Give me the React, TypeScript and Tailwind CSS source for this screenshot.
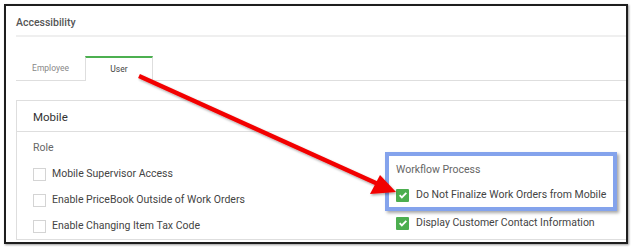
import React from 'react';

function Box({ checked }: { checked?: boolean }) {
  if (checked) {
    return (
      <span className="flex h-[13px] w-[13px] shrink-0 items-center justify-center rounded-[1px] bg-[#4cae4f]">
        <svg viewBox="0 0 12 12" className="h-[10px] w-[10px]">
          <path d="M2 6.2l2.6 2.6L10 3.4" fill="none" stroke="#fff" strokeWidth="2.2" />
        </svg>
      </span>
    );
  }
  return <span className="h-[13px] w-[13px] shrink-0 border border-[#d4d4d4] bg-white" />;
}

export default function App() {
  const left = [
    'Mobile Supervisor Access',
    'Enable PriceBook Outside of Work Orders',
    'Enable Changing Item Tax Code',
  ];

  return (
    <div className="relative h-[248px] w-[632px] bg-white p-[4px] font-['Roboto',sans-serif]">
      <div className="h-[240px] overflow-hidden border-2 border-[#1e1e1e] bg-white shadow-[1px_1px_2px_rgba(0,0,0,0.4)]">
        {/* Header */}
        <div className="ml-[10px] flex h-[31px] items-center border-b-2 border-[#efefef] pt-[4px] text-[10.5px] font-medium text-[#555]">
          Accessibility
        </div>

        {/* Tabs */}
        <div className="ml-[10px] mt-[19px] flex h-[25px] border-b border-[#dedede] text-[8.5px]">
          <div className="flex w-[69px] items-center justify-center pt-[1px] text-[#888]">Employee</div>
          <div className="-mb-px flex w-[68px] items-center justify-center border-x border-t-2 border-x-[#dedede] border-t-[#4cb050] bg-white text-[#444]">
            User
          </div>
        </div>

        {/* Mobile panel */}
        <div className="ml-[10px] mt-[19px] w-[640px] border border-[#dedede]">
          <div className="flex h-[31px] items-center border-b border-[#dedede] pl-[16px] pt-[3px] text-[11.5px] text-[#333]">
            Mobile
          </div>
          <div className="flex pl-[16px]">
            <div className="w-[363px]">
              <div className="flex h-[29px] items-center pt-[3px] text-[10.5px] text-[#666]">Role</div>
              <div className="flex flex-col">
                {left.map((t) => (
                  <div key={t} className="flex h-[26px] items-center gap-[6px] text-[10.5px] text-[#444]">
                    <Box />
                    <span>{t}</span>
                  </div>
                ))}
              </div>
            </div>
            <div className="pt-[30px]">
              <div className="flex h-[16px] items-center text-[10.5px] text-[#666]">Workflow Process</div>
              <div className="mt-[7px] flex h-[20px] items-center gap-[7px] text-[10.5px] text-[#444]">
                <Box checked />
                <span>Do Not Finalize Work Orders from Mobile</span>
              </div>
              <div className="mt-[8px] flex h-[20px] items-center gap-[7px] text-[10.5px] text-[#444]">
                <Box checked />
                <span>Display Customer Contact Information</span>
              </div>
            </div>
          </div>
        </div>
      </div>

      {/* Highlight box */}
      <div className="absolute left-[385px] top-[152px] h-[59px] w-[232px] border-4 border-[#84a3ec] shadow-[2px_2px_3px_rgba(0,0,0,0.35)]" />

      {/* Arrow */}
      <svg className="pointer-events-none absolute left-0 top-0" width="632" height="248" viewBox="0 0 632 248">
        <defs>
          <filter id="sh" x="-10%" y="-10%" width="130%" height="130%">
            <feDropShadow dx="1" dy="1.5" stdDeviation="0.8" floodColor="#000" floodOpacity="0.35" />
          </filter>
        </defs>
        <g filter="url(#sh)">
          <line x1="139" y1="76" x2="378" y2="184" stroke="#f20000" strokeWidth="4.5" />
          <polygon points="396,192 380,175 370,194" fill="#f20000" />
        </g>
      </svg>
    </div>
  );
}
